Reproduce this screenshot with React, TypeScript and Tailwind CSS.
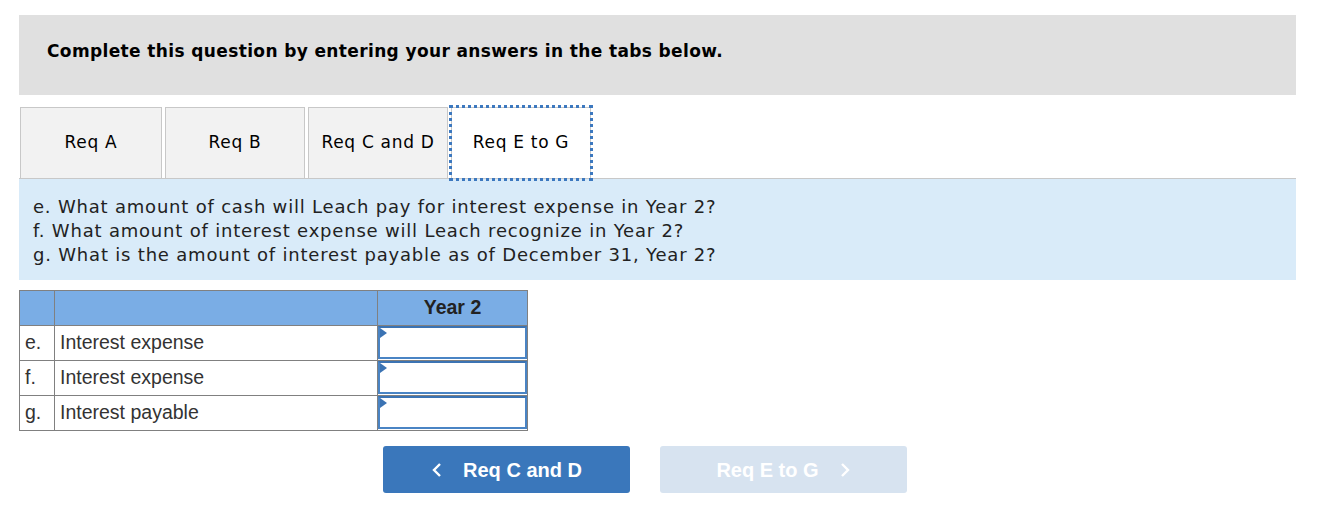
const verdana = { fontFamily: '"DejaVu Sans", Verdana, sans-serif' };

const tabs = [
  { label: "Req A", w: "w-[142px]" },
  { label: "Req B", w: "w-[140px]" },
  { label: "Req C and D", w: "w-[140px]" },
];

const rows = [
  { key: "e.", label: "Interest expense" },
  { key: "f.", label: "Interest expense" },
  { key: "g.", label: "Interest payable" },
];

function AnswerInput() {
  return (
    <div className="relative h-[33px] border-2 border-[#4a84c4] border-t-[#3b73b3] bg-white">
      <span className="absolute left-0 top-0 h-0 w-0 border-y-[5px] border-l-[7px] border-y-transparent border-l-[#3b73b3]" />
    </div>
  );
}

export default function App() {
  return (
    <div className="min-h-[517px] bg-white px-[19px] pt-[15px] text-black" style={verdana}>
      <div className="mr-[18px] h-[80px] bg-[#e0e0e0] pl-[28px] pt-[26px]">
        <h1 className="text-[17px] font-bold leading-[20px] tracking-[0.37px]">
          Complete this question by entering your answers in the tabs below.
        </h1>
      </div>

      <div className="mt-[12px] flex h-[71px] gap-[3px] pl-[1px] text-[17px] tracking-[0.7px]">
        {tabs.map((t) => (
          <div
            key={t.label}
            className={`flex ${t.w} items-center justify-center border border-b-0 border-[#c8c8c8] bg-[#f2f2f2]`}
          >
            {t.label}
          </div>
        ))}
        <div className="relative flex w-[140px] items-center justify-center border border-b-0 border-[#c8c8c8] bg-white">
          Req E to G
          <span className="pointer-events-none absolute -inset-[3px] border-[3px] border-dotted border-[#3c78bf]" />
        </div>
      </div>

      <div className="mr-[18px] border-t border-[#c8c8c8] bg-[#d9ebf9] pb-[13px] pl-[14px] pt-[16px] text-[18px] leading-[24px] tracking-[0.8px] text-[#222]">
        <p>e. What amount of cash will Leach pay for interest expense in Year 2?</p>
        <p>f. What amount of interest expense will Leach recognize in Year 2?</p>
        <p>g. What is the amount of interest payable as of December 31, Year 2?</p>
      </div>

      <table className="mt-[10px] border-collapse text-[19.5px] text-[#333] [font-family:'Liberation_Sans',Arial,sans-serif]">
        <thead>
          <tr className="h-[35px] bg-[#7aade5]">
            <th className="w-[35px] border border-[#808080]" />
            <th className="w-[323px] border border-[#808080]" />
            <th className="w-[150px] border border-[#808080] text-center font-bold text-[#222]">
              Year 2
            </th>
          </tr>
        </thead>
        <tbody>
          {rows.map((r) => (
            <tr key={r.key} className="h-[35px]">
              <td className="border border-[#808080] pl-[5px]">{r.key}</td>
              <td className="border border-[#808080] pl-[5px]">{r.label}</td>
              <td className="border border-[#808080] p-0 pb-[1px]">
                <AnswerInput />
              </td>
            </tr>
          ))}
        </tbody>
      </table>

      <div className="mt-[15px] flex gap-[30px] pl-[364px] [font-family:'Liberation_Sans',Arial,sans-serif]">
        <button className="flex h-[47px] w-[247px] items-center justify-center gap-[20px] rounded-[3px] bg-[#3a77bb] text-[20px] font-bold text-white">
          <svg width="12" height="16" viewBox="0 0 12 16" fill="none">
            <path d="M9 2 L3 8 L9 14" stroke="white" strokeWidth="2.4" />
          </svg>
          <span>Req C and D</span>
        </button>
        <button className="flex h-[47px] w-[247px] items-center justify-center gap-[20px] rounded-[3px] bg-[#d7e3f0] text-[20px] font-bold text-white">
          <span>Req E to G</span>
          <svg width="12" height="16" viewBox="0 0 12 16" fill="none">
            <path d="M3 2 L9 8 L3 14" stroke="white" strokeWidth="2.4" />
          </svg>
        </button>
      </div>
    </div>
  );
}
